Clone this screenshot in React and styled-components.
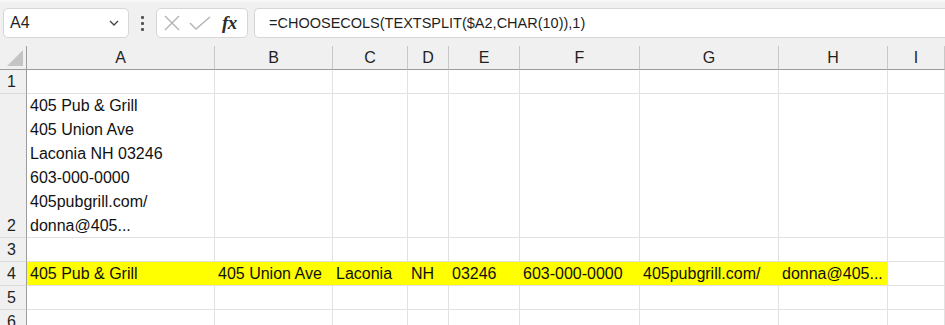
import React from "react";
import styled, { createGlobalStyle } from "styled-components";

const Global = createGlobalStyle`
  html, body {
    margin: 0;
    padding: 0;
    background: #fff;
    font-family: "Liberation Sans", Arial, sans-serif;
    overflow: hidden;
  }
`;

const Page = styled.div`
  width: 945px;
  height: 325px;
  overflow: hidden;
  background: #fff;
`;

const Toolbar = styled.div`
  height: 46px;
  box-sizing: border-box;
  background: #f0f0f0;
  border-top: 2px solid #f7f7f7;
  display: flex;
  align-items: flex-start;
  padding: 6px 0 0 3px;
`;

const Box = styled.div`
  height: 30px;
  box-sizing: border-box;
  background: #fff;
  border: 1px solid #d6d6d6;
  border-radius: 5px;
  display: flex;
  align-items: center;
`;

const NameBox = styled(Box)`
  width: 126px;
  padding: 0 9px 0 6px;
  justify-content: space-between;
  font-size: 16px;
  color: #1f1f1f;
`;

const Dots = styled.div`
  width: 27px;
  height: 30px;
  display: flex;
  flex-direction: column;
  align-items: center;
  justify-content: center;
  gap: 3px;
  span {
    width: 3px;
    height: 3px;
    background: #555;
    border-radius: 1px;
  }
`;

const FxBox = styled(Box)`
  width: 92px;
  padding: 0 6px 0 6px;
  gap: 8px;
`;

const Fx = styled.span`
  font-family: "Liberation Serif", "DejaVu Serif", serif;
  font-style: italic;
  font-weight: bold;
  font-size: 19px;
  color: #2b2b2b;
  margin-left: 3px;
  letter-spacing: -0.5px;
`;

const FormulaBox = styled(Box)`
  flex: 1;
  margin-left: 6px;
  border-right: none;
  border-radius: 5px 0 0 5px;
  padding-left: 14px;
  font-size: 14.5px;
  color: #1f1f1f;
`;

const Sheet = styled.div`
  display: grid;
  grid-template-columns: 27px 188px 118px 75px 41px 71px 120px 139px 109px 1fr;
  grid-template-rows: 24px 24px 144px 24px 24px 24px 24px;
`;

const Corner = styled.div`
  background: #f0f0f0;
  border-right: 1px solid #9c9c9c;
  border-bottom: 1px solid #9c9c9c;
  box-sizing: border-box;
  position: relative;
  svg {
    position: absolute;
    right: 3px;
    bottom: 3px;
  }
`;

const ColHead = styled.div`
  background: #f0f0f0;
  box-sizing: border-box;
  border-right: 1px solid #c8c8c8;
  border-bottom: 1px solid #9c9c9c;
  display: flex;
  align-items: center;
  justify-content: center;
  font-size: 16px;
  color: #1f1f1f;
`;

const RowHead = styled.div`
  background: #f0f0f0;
  box-sizing: border-box;
  border-right: 1px solid #9c9c9c;
  border-bottom: 1px solid #d9d9d9;
  display: flex;
  align-items: flex-end;
  padding: 0 0 0 7px;
  font-size: 16px;
  line-height: 23px;
  color: #1f1f1f;
`;

const Cell = styled.div`
  box-sizing: border-box;
  border-right: 1px solid #e1e1e1;
  border-bottom: 1px solid #e1e1e1;
  background: ${(p) => (p.$hl ? "#ffff00" : "#fff")};
  border-right-color: ${(p) => (p.$hl && !p.$last ? "#ffff00" : "#e1e1e1")};
  padding: 0 3px 0 3px;
  font-size: 16px;
  line-height: 23px;
  color: #111;
  white-space: nowrap;
  overflow: hidden;
  display: flex;
  flex-direction: column;
  justify-content: flex-end;
`;

const Line = styled.div`
  line-height: 24px;
  &:last-child {
    line-height: 23px;
  }
`;

const cols = ["A", "B", "C", "D", "E", "F", "G", "H", "I"];

const a2 = [
  "405 Pub & Grill",
  "405 Union Ave",
  "Laconia NH 03246",
  "603-000-0000",
  "405pubgrill.com/",
  "donna@405...",
];

const row4 = [
  "405 Pub & Grill",
  "405 Union Ave",
  "Laconia",
  "NH",
  "03246",
  "603-000-0000",
  "405pubgrill.com/",
  "donna@405...",
  "",
];

const Cross = () => (
  <svg width="18" height="18" viewBox="0 0 18 18">
    <path d="M2 2 L16 16 M16 2 L2 16" stroke="#b3b3b3" strokeWidth="1.4" fill="none" />
  </svg>
);

const Check = () => (
  <svg width="22" height="14" viewBox="0 0 22 14">
    <path d="M1 7 L7 13 L21 1" stroke="#b3b3b3" strokeWidth="1.4" fill="none" />
  </svg>
);

const Chevron = () => (
  <svg width="10" height="6" viewBox="0 0 10 6">
    <path d="M1 1 L5 5 L9 1" stroke="#444" strokeWidth="1.3" fill="none" />
  </svg>
);

export default function App() {
  return (
    <Page>
      <Global />
      <Toolbar>
        <NameBox>
          <span>A4</span>
          <Chevron />
        </NameBox>
        <Dots>
          <span />
          <span />
          <span />
        </Dots>
        <FxBox>
          <Cross />
          <Check />
          <Fx>fx</Fx>
        </FxBox>
        <FormulaBox>=CHOOSECOLS(TEXTSPLIT($A2,CHAR(10)),1)</FormulaBox>
      </Toolbar>
      <Sheet>
        <Corner>
          <svg width="16" height="16" viewBox="0 0 16 16">
            <path d="M16 0 L16 16 L0 16 Z" fill="#c4c4c4" />
          </svg>
        </Corner>
        {cols.map((c) => (
          <ColHead key={c}>{c}</ColHead>
        ))}

        <RowHead>1</RowHead>
        {cols.map((c) => (
          <Cell key={"1" + c} />
        ))}

        <RowHead>2</RowHead>
        <Cell>
          {a2.map((t) => (
            <Line key={t}>{t}</Line>
          ))}
        </Cell>
        {cols.slice(1).map((c) => (
          <Cell key={"2" + c} />
        ))}

        <RowHead>3</RowHead>
        {cols.map((c) => (
          <Cell key={"3" + c} />
        ))}

        <RowHead>4</RowHead>
        {row4.map((t, i) => (
          <Cell key={"4" + i} $hl={i < 8} $last={i === 7}>
            {t}
          </Cell>
        ))}

        <RowHead>5</RowHead>
        {cols.map((c) => (
          <Cell key={"5" + c} />
        ))}

        <RowHead>6</RowHead>
        {cols.map((c) => (
          <Cell key={"6" + c} />
        ))}
      </Sheet>
    </Page>
  );
}
